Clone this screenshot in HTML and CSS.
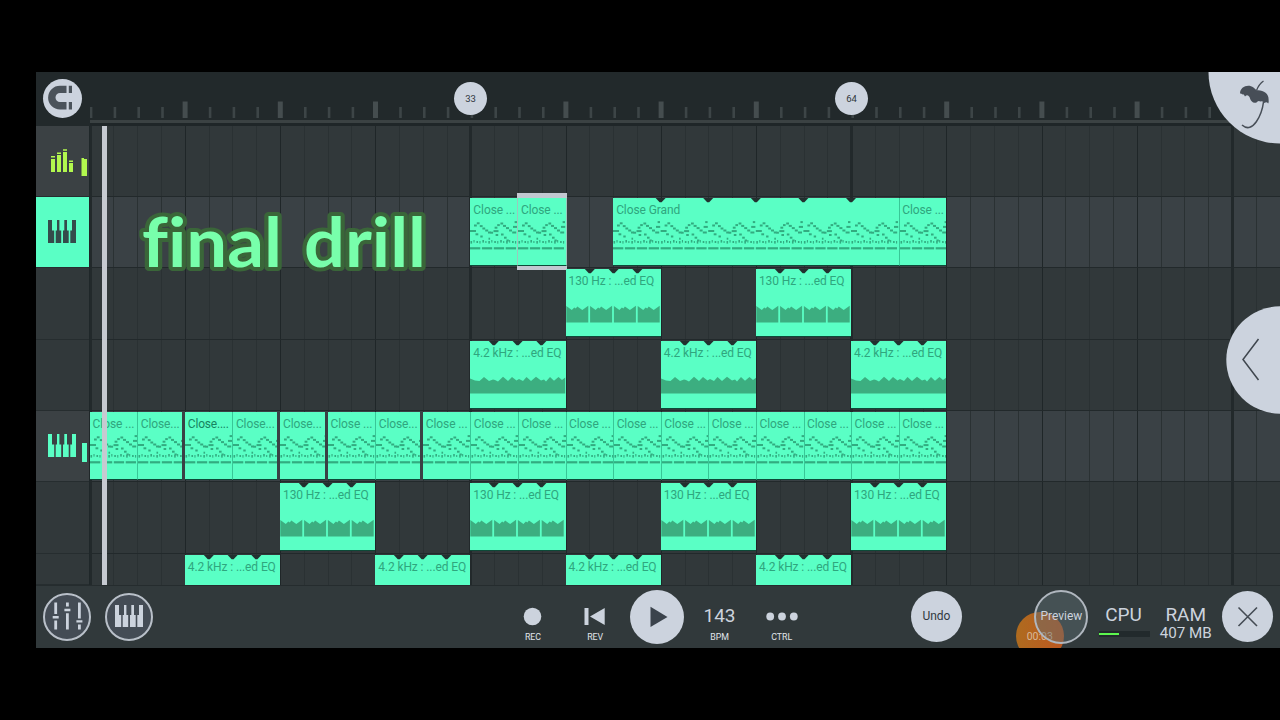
FILE: index.html
```html
<!DOCTYPE html>
<html lang="en">
<head>
<meta charset="utf-8">
<title>final drill</title>
<link rel="stylesheet" href="styles.css">
</head>
<body>
<svg class="defs" aria-hidden="true">
  <symbol id="piano" viewBox="0 0 28 23" preserveAspectRatio="none">
    <path d="M0 0h4v10.5h2.2V23H0zM9 0h2.4v10.5h1.8V23H7.7V10.5H9zM16.3 0H19v10.5h1.7V23H15V10.5h1.3zM24 0h4v23h-5.7V10.5H24z"/>
  </symbol>
</svg>
<div class="app">
  <header class="top">
    <div class="corner">
      <div class="disc magnet">
        <svg width="40" height="40" viewBox="0 0 40 40"><path d="M23.500 7.800H17a11.900 11.900 0 0 0 0 23.800h6.500V24H17a4.500 4.500 0 0 1 0-9h6.500zM25.800 7.800H29V15h-3.200zM25.800 24H29v7.600h-3.200z"/></svg>
      </div>
    </div>
    <div class="ruler">
      <svg class="ticks" id="ticks" width="1190" height="54"></svg>
      <span class="marker marker-a">33</span>
      <span class="marker marker-b">64</span>
    </div>
  </header>

  <main class="body">
    <aside class="channels">
      <div class="ch lit">
        <svg width="53" height="70" viewBox="0 0 53 70" fill="#b2f84e"><path d="M15 33h4v13h-4zM15 30h4v1.500h-4zM21 29h4v17h-4zM21 26.500h4v1.500h-4zM27 26h4v20h-4zM27 23.300h4v1.500h-4zM33 37h4v9h-4zM33 34.500h4v1.500h-4zM45.500 32h2.500v1h3v17h-5.500z"/></svg>
      </div>
      <div class="ch selected"><svg class="keys" width="28" height="23"><use href="#piano"/></svg></div>
      <div class="ch"></div>
      <div class="ch"></div>
      <div class="ch lit mint">
        <svg class="keys" width="28" height="23"><use href="#piano"/></svg><i class="level"></i>
      </div>
      <div class="ch"></div>
      <div class="ch"></div>
    </aside>
    <section class="lanes">
      <svg class="lines" id="lines" width="1190" height="459"></svg>
      <div class="tracks" id="tracks"></div>
      <i class="playhead"></i>
    </section>
  </main>

  <footer class="bar">
    <div class="cell"><div class="ring">
      <svg width="47" height="47" viewBox="0 0 47 47" fill="#ccd3dd"><path d="M10.300 9.500h2.800v11.500h-2.800zM8.700 23h6v2.400h-6zM10.300 27.400h2.800v9h-2.800zM22 9.500h2.800v4H22zM20.400 15.700h6v2.600h-6zM22 20.200h2.800v16.200H22zM34 9.500h2.800v16H34zM32.400 27.200h6v2.400h-6zM34 31.500h2.800v5H34z"/></svg>
    </div></div>
    <div class="cell"><div class="ring"><svg class="lightkeys" width="28" height="22"><use href="#piano"/></svg></div></div>
    <div></div>
    <div class="cell tool"><svg width="30" height="22" viewBox="0 0 30 22"><circle cx="14.500" cy="10.500" r="8.800"/></svg><span>REC</span></div>
    <div class="cell tool"><svg width="30" height="22" viewBox="0 0 30 22"><path d="M4.500 2h4v17h-4zM24.700 2v17L10 10.500z"/></svg><span>REV</span></div>
    <div class="cell"><div class="disc play"><svg width="54" height="54" viewBox="0 0 54 54"><path d="M20.500 16.800v20.200L37.500 27z"/></svg></div></div>
    <div class="cell tool"><b>143</b><span>BPM</span></div>
    <div class="cell tool"><svg width="34" height="22" viewBox="0 0 34 22"><circle cx="5.200" cy="10.500" r="3.900"/><circle cx="17" cy="10.500" r="3.900"/><circle cx="28.800" cy="10.500" r="3.900"/></svg><span>CTRL</span></div>
    <div></div>
    <div class="cell"><div class="disc undo">Undo</div></div>
    <div></div>
    <div class="cell"><div class="recorder">00:03</div><div class="ring preview">Preview</div></div>
    <div class="cell stat"><b>CPU</b><i class="load"></i></div>
    <div class="cell stat"><b>RAM</b><span>407 MB</span></div>
    <div class="cell"><div class="disc close"><svg width="52" height="52" viewBox="0 0 52 52" fill="none" stroke="#444b54" stroke-width="1.600"><path d="M16.500 16.500l18.500 18.500M35 16.500L16.500 35"/></svg></div></div>
  </footer>

  <svg class="title" width="320" height="90" viewBox="0 0 320 90"><text y="67"><tspan x="12" textLength="140" lengthAdjust="spacingAndGlyphs">final</tspan><tspan> </tspan><tspan x="174" textLength="122" lengthAdjust="spacingAndGlyphs">drill</tspan></text></svg>

  <svg class="logo" width="72" height="72" viewBox="0 0 72 72">
    <circle cx="72" cy="0" r="71.500" fill="#ccd3de"/>
    <path d="M48.500 18.500Q51 12 55.500 9" fill="none" stroke="#474e57" stroke-width="1.300"/>
    <path d="M32 21.500C32 15 40 11.500 45.500 15.500L48.500 18.300C54.500 17.500 61 21 60.600 27.500Q61 30 60.200 31.500Q58.500 29.500 56.500 31Q54.500 28.500 52.500 29.500Q50 28 48.500 30.500Q43.500 32 41.500 25Q39.500 22 37 24.500Q35.500 21.500 34.500 22.500Q33 21 32 21.500Z" fill="#474e57"/>
    <path d="M55.500 30C54 42 45 63 34 53" fill="none" stroke="#474e57" stroke-width="1.500"/>
  </svg>
  <svg class="drawer" width="54" height="108" viewBox="0 0 54 108"><circle cx="54" cy="54" r="53.700" fill="#ccd3de"/><path d="M32.500 33L17 53.500l15.500 20.500" fill="none" stroke="#3f464e" stroke-width="1.500"/></svg>
</div>
<script src="app.js"></script>
</body>
</html>
```
FILE: styles.css
```css
* { box-sizing: border-box; }
body {
  margin: 0;
  width: 1280px;
  height: 720px;
  overflow: hidden;
  background: #000;
  font-family: Roboto, "Liberation Sans", sans-serif;
}
.defs { display: none; }
svg { display: block; flex: none; }
.app {
  position: relative;
  display: grid;
  grid-template-rows: 54px 459px 63px;
  width: 1244px;
  height: 576px;
  margin: 72px 0 0 36px;
  overflow: hidden;
  background: #31393b;
}
.top { display: grid; grid-template-columns: 54px 1190px; background: #22292b; }
.corner { padding: 6.500px 0 0 7px; }
.ruler { position: relative; }
.disc {
  display: flex;
  align-items: center;
  justify-content: center;
  border-radius: 50%;
  background: #ccd3de;
  color: #31383f;
  fill: #3b434c;
}
.magnet { width: 39px; height: 39px; fill: #4b535b; }
.marker {
  position: absolute;
  top: 10px;
  width: 33px;
  height: 33px;
  border-radius: 50%;
  background: #ccd3de;
  color: #30373d;
  font-size: 9.500px;
  line-height: 33px;
  text-align: center;
}
.marker-a { left: 364px; }
.marker-b { left: 745px; }

.body { display: grid; grid-template-columns: 54px 1190px; }
.channels, .tracks {
  display: grid;
  grid-template-rows: 71px 71px 72px 71px 71px 72px 31px;
}
.channels { border-right: 1px solid #1f2729; }
.ch { display: flex; border-bottom: 1px solid #262d2f; background: #31383a; }
.lit { background: #3b4144; }
.selected { background: #5affc5; fill: #344b4b; }
.mint { fill: #5affc5; }
.keys { margin: 23px 0 0 12px; }
.level { width: 5px; height: 19px; margin: 32px 0 0 6px; background: #5affc5; }

.lanes { position: relative; display: grid; }
.lines, .tracks { grid-area: 1 / 1; }
.lines { z-index: 1; }
.tracks { z-index: 2; margin-left: -0.400px; }
.track {
  display: grid;
  grid-template-columns: repeat(49, 23.800px);
  padding-top: 1px;
  min-height: 0;
}
.track:last-child { overflow: hidden; }
.clip {
  display: grid;
  height: 68px;
  overflow: hidden;
  background: #5affc5;
  border-bottom: 1px solid #0d4a38;
  color: #2fa67e;
  font-size: 12px;
  letter-spacing: -0.100px;
  line-height: 15px;
  white-space: nowrap;
}
.clip > * { grid-area: 1 / 1; }
.clip span { padding: 5px 0 0 3px; }
.joined { border-left: 1px solid #38c797; }
.joined span { padding-left: 2.500px; }
.short { margin-right: 3px; }
.bold span { color: #168461; letter-spacing: -0.200px; }
.picked {
  overflow: visible;
  margin: 0 -1px 0 -1px;
  border-left: 1px solid #9ac9bc;
  border-right: 1px solid #9ac9bc;
  box-shadow: 0 -5px 0 #c3c8d1, 0 4px 0 #c3c8d1;
}
.playhead {
  position: absolute;
  z-index: 3;
  left: 11.500px;
  top: 0;
  width: 5px;
  height: 459px;
  background: #c6cad1;
}

.title { position: absolute; z-index: 5; left: 94px; top: 128px; }
.title text {
  font-family: Lato, sans-serif;
  font-weight: 700;
  font-size: 68px;
  font-variant-ligatures: none;
  fill: #78ffab;
  stroke: #3a6639;
  stroke-width: 8px;
  stroke-linejoin: round;
  paint-order: stroke;
}
.logo { position: absolute; z-index: 5; right: 0; top: 0; }
.drawer { position: absolute; z-index: 5; right: 0; top: 234px; }

.bar {
  display: grid;
  grid-template-columns: 62.200px 62.200px 341.500px repeat(5, 62.200px) 92.500px 62.200px 62.800px repeat(4, 62.200px);
  border-top: 1px solid #252c2e;
  background: #31393b;
  color: #ccd3dd;
}
.cell { position: relative; display: flex; justify-content: center; }
.ring {
  display: flex;
  flex: none;
  align-items: center;
  justify-content: center;
  width: 48px;
  height: 48px;
  margin-top: 6.500px;
  border: 2px solid #b9c0c9;
  border-radius: 50%;
  background: #444c55;
}
.lightkeys { fill: #ccd3dd; margin-top: -2px; }
.tool { flex-direction: column; align-items: center; justify-content: flex-start; padding-top: 19.500px; fill: #ccd3dd; }
.tool span { margin-top: 4.500px; font-size: 8.800px; line-height: 11px; color: #e0e4e9; }
.tool b { height: 22px; font-weight: 400; font-size: 19px; line-height: 20px; }
.play { flex: none; width: 54px; height: 54px; margin-top: 3.500px; }
.undo, .close { flex: none; width: 51px; height: 51px; margin-top: 5px; font-size: 12px; }
.undo { line-height: 14px; padding-bottom: 1px; }
.preview {
  position: relative;
  width: 54px;
  height: 54px;
  margin-top: 3.500px;
  padding-bottom: 1px;
  border-color: #b0b7bf;
  background: rgba(96, 110, 115, .45);
  font-size: 12px;
}
.recorder {
  position: absolute;
  left: -14.500px;
  top: 26px;
  width: 48px;
  height: 48px;
  border-radius: 50%;
  background: linear-gradient(90deg, #ae6b1f, #bd5720);
  color: #d8b999;
  font-size: 10.500px;
  line-height: 49px;
  text-align: center;
}
.stat { flex-direction: column; align-items: center; justify-content: flex-start; padding-top: 18px; }
.stat b { font-weight: 400; font-size: 19px; line-height: 22px; }
.stat span { margin-top: -2px; font-size: 15.200px; line-height: 18px; white-space: nowrap; }
.load { width: 51px; height: 6px; margin: 5px 0 0 1px; border: solid #222a2c; border-width: 2px 0; background: linear-gradient(90deg, #5cf64e 20px, #222a2c 20px); }
```
FILE: app.js
```js
const STEP = 23.8;
const PERIOD = STEP * 2;

const rect = (x, y, w, h, fill) =>
  `<rect x="${x.toFixed(2)}" y="${y}" width="${w.toFixed(2)}" height="${h}" fill="${fill}"/>`;

// Ruler ticks, one per step, taller at each fourth step
let ticks = rect(0, 48, 1190, 3, '#3b4243') + rect(0, 51, 1190, 3, '#1f2628');
for (let i = 0; i < 50; i++) {
  const x = i * STEP;
  const tall = i % 4 === 0 && i % 16 !== 0;
  ticks += tall ? rect(x - 2.6, 29.5, 5, 16.5, '#454d4f') : rect(x - .2, 35, 2.6, 11, '#3d4547');
}
document.getElementById('ticks').innerHTML = ticks;

// Lane backgrounds and grid lines
const tops = [0, 71, 142, 214, 285, 356, 428, 459];
let lines = '';
for (let r = 0; r < 7; r++) {
  lines += rect(0, tops[r], 1190, tops[r + 1] - tops[r], r === 1 || r === 4 ? '#3a4145' : '#31383a');
}
for (let i = 0; i < 50; i++) {
  const x = Math.round(i * STEP - .4);
  if (i % 16 === 0) lines += rect(x - 1, 0, 3, 459, '#22292b');
  else if (i % 4 === 0) lines += rect(x, 0, 1, 459, '#1f2628');
  else lines += rect(x, 0, 1, 459, '#2a3133');
}
for (let r = 1; r < 7; r++) lines += rect(0, tops[r] - 1, 1190, 1, '#22292b');
document.getElementById('lines').innerHTML = lines;

// One phrase of the piano part
const phrase = [
  [0, 31.5, 6], [4, 26, 2.8], [6.8, 23.8, 2.8], [9.8, 26.6, 2.8], [12.4, 29, 2.8], [15.2, 31, 3], [18, 33, 3],
  [5.5, 34.8, 2.8], [10.3, 37, 2.4],
  [20.5, 33.2, 2.6], [23.5, 31.6, 5], [24.6, 28.2, 2.8], [27.2, 25.6, 2.6], [25.6, 35.5, 2.6],
  [30.4, 24, 2.8], [33, 26.4, 3], [36, 28.6, 3], [39, 31, 3], [42.2, 33, 4],
  [43, 27.4, 4.2], [44.6, 22.6, 2.4], [31, 35, 2.6],
  [34, 38.2, 2.6], [36.4, 41, 2.4], [18.5, 39.2, 1.6]
];
function phraseSvg(x0) {
  let out = phrase.map(([x, y, w]) => rect(x0 + x, y + .5, w, 2, '#32ac80')).join('');
  for (let k = 0; k < 16; k++) {
    out += rect(x0 + k * 2.97 + .5, k % 3 === 1 ? 42 : 43, k % 2 ? 1.1 : 1.6, k % 3 === 2 ? 2 : 2.6, '#32ac80');
  }
  for (let k = 0; k < 4; k++) out += rect(x0 + k * 11.9, 49.2, 10.3, 2.2, '#32ac80');
  return out;
}

const notch = x =>
  `<path d="M${x - 5} 0L${x - 1} 4.2h2L${x + 5} 0z" fill="#22302f"/>`;

function art(kind, width) {
  let out = '';
  if (kind === 'C') {
    for (let x = 0; x < width - 5; x += PERIOD) {
      out += phraseSvg(x);
      if (x > 0) out += notch(x);
    }
  } else {
    for (let k = 0; k < 4; k++) {
      const x = k * STEP;
      if (k) out += notch(x);
      if (kind === 'L') {
        out += `<path transform="translate(${x + .3} 0)" d="M0 37L5.500 41L8 38.500L9.500 39.500L11 37.500L16 41L22 36.800V53.500H0z" fill="#3cae80"/>`;
      }
    }
    if (kind === 'H') {
      out += '<path d="M0 37.500L5 39.500 9.500 40 14 36 19 40 23 38.500 25 39 28 40.500 33 35.800 38 40 42 36 46.500 39.500 49 38 53 40 56.500 36 61 40 66 35.800 71 39.500 74 38.500 76 40.500 80 36 84 39.800 88.500 36 92 39 95.200 36.500V52.500H0z" fill="#3cae80"/>';
    }
  }
  return `<svg width="${width}" height="67">${out}</svg>`;
}

const label = { C: 'Close ...', L: '130 Hz : ...ed EQ', H: '4.2 kHz : ...ed EQ' };
const mk = (kind, start, span, cls = '', text = label[kind]) => ({ kind, start, span, cls, text });

const mainRow = [];
for (let k = 0; k < 18; k++) {
  const short = [1, 3, 4, 6].includes(k);
  const cls = [short ? 'short' : '', [1, 3, 6, 8, 9, 10, 11, 12, 13, 14, 15, 16, 17].includes(k) ? 'joined' : '', k === 2 ? 'bold' : ''].join(' ');
  mainRow.push(mk('C', k * 2, 2, cls, k === 2 ? 'Close....' : short ? 'Close...' : 'Close ...'));
}

const rows = [
  [],
  [mk('C', 16, 2), mk('C', 18, 2, 'picked'), mk('C', 22, 12, '', 'Close Grand'), mk('C', 34, 2, 'joined')],
  [20, 28].map(s => mk('L', s, 4)),
  [16, 24, 32].map(s => mk('H', s, 4)),
  mainRow,
  [8, 16, 24, 32].map(s => mk('L', s, 4)),
  [4, 12, 20, 28].map(s => mk('H', s, 4))
];

document.getElementById('tracks').innerHTML = rows.map(row =>
  '<div class="track">' + row.map(c =>
    `<div class="clip ${c.cls}" style="grid-column:${c.start + 1} / span ${c.span}">` +
    art(c.kind, c.span * STEP) + `<span>${c.text}</span></div>`).join('') + '</div>').join('');
```
